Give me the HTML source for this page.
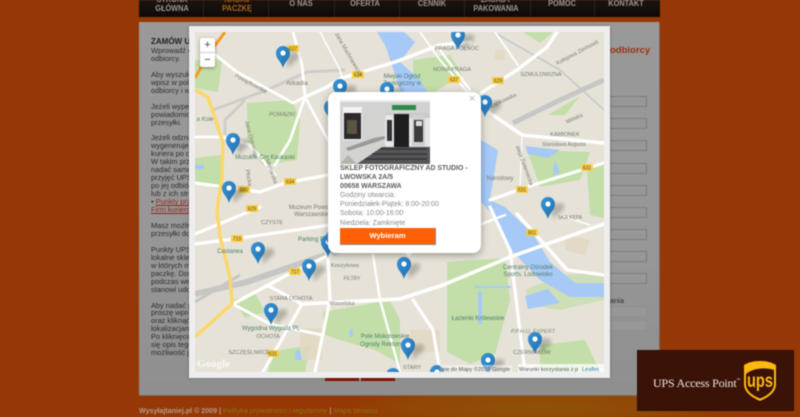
<!DOCTYPE html>
<html lang="pl"><head><meta charset="utf-8"><title>Wysylajtaniej.pl</title>
<style>
html,body{margin:0;padding:0;width:800px;height:417px;overflow:hidden}
body{position:relative;background:#963805;font-family:"Liberation Sans",sans-serif}
#clip{position:absolute;left:0;top:0;width:800px;height:417px;overflow:hidden}
#w{position:absolute;left:0;top:0;width:800px;height:417px;filter:blur(.4px)}
.a{position:absolute}
.glow{left:340px;top:385px;width:400px;height:32px;background:radial-gradient(ellipse at 50% 70%,#8e5207 0%,rgba(142,82,7,.6) 45%,rgba(150,56,5,0) 72%)}
nav{left:139px;top:0;width:521px;height:17px;background:linear-gradient(#1c1410,#0d0a08);overflow:hidden}
nav b{position:absolute;text-align:center;width:64px;font-size:8px;line-height:9px;color:#9c9792;transform:scaleX(.92)}
nav i{position:absolute;top:0;width:1px;height:17px;background:#2a211c}
.panel{left:139px;top:22px;width:520px;height:373px;background:linear-gradient(#999 0,#979797 60%,#8f8f8f 100%);border-right:1px solid #7d6a5c;border-bottom:1px solid #7d6a5c}
.txt{left:151px;top:47px;width:60px;font-size:7.4px;line-height:7.95px;color:#2e2e2e;white-space:nowrap}
.txt u{color:#8a2a20}
.inp{left:560px;width:85px;height:9px;border:1px solid #7c7c7c;background:#979797}
.modal{left:189px;top:26px;width:421px;height:352px;background:#eee;box-shadow:0 0 3px rgba(0,0,0,.3)}
.pop{left:328px;top:92px;width:153px;height:161px;background:#fff;border-radius:8px;box-shadow:0 2px 8px rgba(0,0,0,.35);font-size:7px;line-height:9.1px;color:#8a8a8a;white-space:nowrap}
.pop p{margin:0;position:absolute;left:12px;top:72px}
.pop b{color:#5e5e5e;font-size:6.9px}
.btn{left:12px;top:136px;width:96px;height:17px;background:#ff5f05;color:#fff;font-weight:bold;font-size:7.6px;line-height:16px;text-align:center;border-bottom:1px solid #8a8a8a;border-right:1px solid #8a8a8a;box-sizing:border-box}
.zoom{left:200px;top:38px;width:15px;height:29px;background:#fff;border-radius:2px;box-shadow:0 1px 3px rgba(0,0,0,.4);color:#444;text-align:center;font-size:11px;line-height:14px}
.foot{left:139px;top:407px;font-size:7.1px;line-height:9px;color:#b39a8a;font-weight:bold;white-space:nowrap}
.foot span{color:#8d7410;font-weight:normal}
.ups{left:638px;top:351px;width:155px;height:59px;background:#3a1206;box-shadow:0 0 0 1px #2a1005}
</style></head><body><div id="clip"><div id="w">
<div class="a glow"></div>
<nav class="a">
<i style="left:64px"></i><i style="left:129px"></i><i style="left:195px"></i><i style="left:260px"></i><i style="left:325px"></i><i style="left:391px"></i><i style="left:455px"></i>
<b style="left:1px;top:-5px">STRONA<br>GŁÓWNA</b>
<b style="left:66px;top:-5px;color:#a5651f">NADAJ<br>PACZKĘ</b>
<b style="left:130px;top:-1px">O NAS</b>
<b style="left:194px;top:-1px">OFERTA</b>
<b style="left:261px;top:-1px">CENNIK</b>
<b style="left:325px;top:-5px">ZASADY<br>PAKOWANIA</b>
<b style="left:391px;top:-1px">POMOC</b>
<b style="left:455px;top:-1px">KONTAKT</b>
</nav>
<div class="a panel"></div>
<div class="a txt"><b style="font-size:8px;position:absolute;top:-9px;left:0;color:#222">ZAMÓW U</b>Wprowadź dane<br>odbiorcy.<br><br>Aby wyszukać<br>wpisz w polach<br>odbiorcy i wybierz<br><br>Jeżeli wypełnisz<br>powiadomione<br>przesyłki.<br><br>Jeżeli odznaczysz<br>wygeneruje list<br>kuriera po odbiór<br>W takim przypadku<br>nadać samodzielnie<br>przyjęć UPS<br>po jej odbiór<br>lub z ich strony<br>▪ <u>Punkty przesyłek</u><br><u>Firm kurierskich</u><br><br>Masz możliwość<br>przesyłki do<br><br>Punkty UPS<br>lokalne sklepy<br>w których możesz<br>paczkę. Dostępne<br>podczas weekendu<br>stanowi udogodnienie<br><br>Aby nadać paczkę<br>proszę wprowadzić<br>oraz kliknąć<br>lokalizacjami<br>Po kliknięciu<br>się opis tego<br>możliwość jego</div>
<div class="a" style="left:610px;top:45px;font-size:9.5px;font-weight:bold;color:#9a3212">odbiorcy</div>
<div class="a inp" style="top:96px"></div><div class="a inp" style="top:118px"></div><div class="a inp" style="top:140px"></div><div class="a inp" style="top:163px"></div><div class="a inp" style="top:185px"></div><div class="a inp" style="top:207px"></div><div class="a inp" style="top:229px"></div><div class="a inp" style="top:251px"></div><div class="a inp" style="top:273px"></div>
<div class="a" style="left:610px;top:296px;font-size:7.4px;color:#303030">ania</div>
<div class="a inp" style="top:306px;border-color:#8f8f8f"></div><div class="a inp" style="top:320px;border-color:#8f8f8f"></div>
<div class="a" style="left:325px;top:376px;width:34px;height:5px;background:#8a1208"></div>
<div class="a" style="left:361px;top:376px;width:34px;height:5px;background:#8a1208"></div>
<div class="a modal"></div>
<svg class="a" style="left:0;top:0" width="800" height="417" viewBox="0 0 800 417">
<defs>
<clipPath id="c"><rect x="195" y="32" width="409" height="340"/></clipPath>
<linearGradient id="p" x1="0" y1="0" x2="1" y2="1"><stop offset="0" stop-color="#3a94d6"/><stop offset="1" stop-color="#1f6fb0"/></linearGradient>
<filter id="s"><feGaussianBlur stdDeviation="2"/></filter>
<symbol id="pin" overflow="visible"><path d="M5,0 L16,-10 Q18,-16 10,-16 L3,-12Z" fill="#000" opacity=".22" filter="url(#s)"/><path d="M0,0C-2,-7-7,-9-7,-15A7,7 0 1 1 7,-15C7,-9 2,-7 0,0Z" fill="url(#p)"/><circle cx="0" cy="-15" r="2.600" fill="#fff"/></symbol>
</defs>
<g clip-path="url(#c)">
<rect x="195" y="32" width="409" height="340" fill="#e6e2d7"/>
<g fill="#c3dea9">
<path d="M247,103L292,100 300,120 297,160 262,165 247,140Z"/>
<path d="M195,60L222,60 218,92 195,88Z"/>
<path d="M195,158L222,155 222,190 195,183Z"/>
<path d="M323,312L390,300 400,320 400,364 375,350 340,340 325,335Z"/>
<path d="M447,262L505,258 510,300 495,354 470,364 447,352Z"/>
<path d="M527,150L590,152 580,180 540,187Z"/>
<path d="M587,170L604,163 604,218 590,215Z"/>
<path d="M540,345L585,340 600,372 540,372Z"/>
<path d="M413,60L450,55 462,75 430,95 413,90Z"/>
<path d="M523,32L553,32 540,43Z"/>
<path d="M270,352L310,345 305,372 268,372Z"/>
<path d="M525,290L560,275 604,272 604,300 560,310 530,305Z" opacity=".7"/>
<path d="M233,300L255,293 265,312 245,318Z"/>
<path d="M548,115L580,96 565,115Z"/>
</g>
<g fill="#e2d8c0" opacity=".8"><rect x="300" y="328" width="22" height="32"/><rect x="495" y="50" width="10" height="10"/><rect x="410" y="330" width="30" height="22"/><path d="M565,235L590,240 585,255 565,250Z"/></g>
<g fill="#a6c9f8">
<path d="M377,32L404,32 415,42 400,62 420,80 445,120 470,135 481,140 498,150 490,200 505,207 533,234 550,262 575,283 604,283 604,297 570,297 540,280 513,252 493,215 470,190 440,140 400,90 392,65 385,45Z"/>
<path d="M525,296L548,289 560,303 528,309Z"/>
<path d="M525,146L560,150 548,158 528,154Z"/>
<path d="M555,160L560,172 553,175Z"/>
<rect x="475" y="286" width="36" height="2"/>
<rect x="478" y="292" width="4" height="32"/>
<path d="M296,350L300,350 302,360 295,360Z"/>
<ellipse cx="351" cy="333" rx="2" ry="4"/>
<rect x="195" y="165" width="9" height="4"/>
</g>
<g fill="none" stroke="#cfcdc9" stroke-width="3">
<path d="M213,110L267,90 307,72 345,70"/>
<path d="M225,135L225,120 245,100"/>
</g>
<g fill="none" stroke="#c6c6c6">
<path d="M195,294L247,282 325,255" stroke-width="6"/>
<path d="M195,302L240,275" stroke-width="3"/>
<path d="M513,123L560,100 604,80" stroke-width="5"/>
<path d="M495,33L560,70 604,110" stroke-width="1.5"/>
</g>
<g fill="none" stroke="#fff" stroke-linecap="round" stroke-linejoin="round" stroke-width="2.800">
<path d="M213,53L237,72 293,103 305,97"/>
<path d="M293,32L302,65 305,97 290,140 275,165"/>
<path d="M305,97L328,140" />
<path d="M305,97L325,88 342,78 395,62 440,45 470,42" stroke-width="3.400"/>
<path d="M195,137L222,137 250,145 275,175"/>
<path d="M195,183L225,187 260,192 285,183 328,175" stroke-width="3.200"/>
<path d="M195,234L260,207" stroke-width="3.200"/>
<path d="M195,244L233,239 330,225" stroke-width="3.200"/>
<path d="M233,304L287,275 325,257" stroke-width="3.400"/>
<path d="M233,304L270,324 322,335"/>
<path d="M267,285L302,304 263,372" stroke-width="3.200"/>
<path d="M328,260L330,300 315,372" stroke-width="3.200"/>
<path d="M302,304L400,299 443,285 510,257 604,224" stroke-width="3.600"/>
<path d="M490,207L510,250 517,307 525,372" stroke-width="3.200"/>
<path d="M517,214L547,247 567,270 604,275" stroke-width="3.400"/>
<path d="M413,300L433,330 440,372" stroke-width="3.200"/>
<path d="M373,255L380,300 400,372" stroke-width="2.400"/>
<path d="M481,93L517,70 547,47 557,32" stroke-width="3.400"/>
<path d="M490,113L522,135 604,143" stroke-width="3.600"/>
<path d="M490,200L533,185 604,163" stroke-width="3.200"/>
<path d="M495,32L518,65" stroke-width="1.800"/>
<path d="M420,32L440,60 470,95" stroke-width="1.800"/>
<path d="M320,32L340,70 345,90" stroke-width="1.600"/>
<path d="M440,50L470,90" stroke-width="2.400"/>
<path d="M522,135L520,190" stroke-width="1.200"/>
<path d="M440,240L505,215" stroke-width="2.400"/>
<path d="M560,215L590,225" stroke-width="1.600"/>
</g>
<path d="M225,32L208,55 195,78" fill="none" stroke="#f59b22" stroke-width="3"/>
<path d="M195,90L208,97 223,143 222,177 217,210 220,237 230,277 232,304 195,337" fill="none" stroke="#fdd769" stroke-width="3.400" stroke-linejoin="round"/>
<g fill="#f8ce45">
<rect x="287" y="45" width="12" height="7" rx="1"/><rect x="352" y="71" width="12" height="7" rx="1"/><rect x="448" y="76" width="12" height="7" rx="1"/><rect x="492" y="77" width="12" height="7" rx="1"/><rect x="284" y="178" width="12" height="7" rx="1"/><rect x="238" y="186" width="12" height="7" rx="1"/><rect x="246" y="205" width="12" height="7" rx="1"/><rect x="231" y="235" width="12" height="7" rx="1"/><rect x="289" y="268" width="12" height="7" rx="1"/><rect x="267" y="350" width="12" height="7" rx="1"/><rect x="581" y="164" width="12" height="7" rx="1"/><rect x="516" y="186" width="12" height="7" rx="1"/><rect x="526" y="229" width="12" height="7" rx="1"/>
</g>
<g font-family="Liberation Sans,sans-serif" font-size="5" fill="#5a4a1a" text-anchor="middle">
<text x="293" y="50.500">637</text><text x="358" y="76.500">634</text><text x="454" y="81.500">637</text><text x="498" y="82.500">629</text><text x="290" y="183.500">634</text><text x="244" y="191.500">580</text><text x="252" y="210.500">629</text><text x="237" y="240.500">719</text><text x="295" y="273.500">717</text><text x="273" y="355.500">631</text><text x="587" y="169.500">631</text><text x="522" y="191.500">631</text><text x="532" y="234.500">801</text>
</g>
<g font-family="Liberation Sans,sans-serif" font-size="5.6" fill="#7a7a74" text-anchor="middle">
<text x="297" y="85" font-size="6.4">Arkadia</text>
<text x="282" y="116" font-style="italic">POWĄZKI</text>
<text x="205" y="121" font-size="6" fill="#5d8a68" font-style="italic">a Kole</text>
<text x="265" y="159" font-size="6" fill="#4c8068">Muzułm. Cm Kaukaski</text>
<text x="272" y="224">CZYSTE</text>
<text x="315" y="209" font-size="6">Muzeum Powstania</text>
<text x="315" y="216" font-size="6">Warszawskiego</text>
<text x="312" y="241" font-size="6" fill="#4c8068">Parking Pr</text>
<text x="230" y="253" font-size="6" fill="#4c8068">Castanea</text>
<text x="291" y="300">STARA OCHOTA</text>
<text x="271" y="330" font-size="6" fill="#4c8068">Wygodna Wygoda PL</text>
<text x="268" y="338">OCHOTA</text>
<text x="249" y="354" font-size="5.6">SZCZĘŚLIWICE</text>
<text x="342" y="305">Wawelska</text>
<text x="345" y="267">Koszykowa</text>
<text x="352" y="280" font-size="5">FILTRY</text>
<text x="385" y="338" font-size="6" fill="#4c8068">Pole Mokotowskie</text>
<text x="385" y="346" font-size="6" fill="#4c8068">Ogrody Rektorskie</text>
<text x="457" y="50">PRAGA PÓŁNOC</text>
<text x="452" y="71">NOWA PRAGA</text>
<text x="541" y="76">SZMULOWIZNA</text>
<text x="402" y="78" font-size="6" fill="#4c8068">Miejski Ogród</text>
<text x="402" y="85" font-size="6" fill="#4c8068">Zoologiczny w</text>
<text x="565" y="136">KAMIONEK</text>
<text x="500" y="180" font-size="6">Narodowy</text>
<text x="570" y="219" font-size="5">SKA KĘPA</text>
<text x="528" y="269" font-size="6" fill="#4c8068">Centralny Ośrodek</text>
<text x="528" y="276" font-size="6" fill="#4c8068">Sports. Lodowisko</text>
<text x="478" y="320" font-size="6" fill="#4c8068">Łazienki Królewskie</text>
<text x="533" y="333" fill="#7a8c7a" font-style="italic">P.P.H.U. EXPERT</text>
<text x="532" y="354">CZERNIAKÓW</text>
<text x="412" y="369">STARY</text>
<text x="578" y="54" transform="rotate(-28 578 54)">Kolejowa Ziemowit</text>
<text x="504" y="102" transform="rotate(-25 504 102)">Ząbkowska</text>
<text x="575" y="120" transform="rotate(-25 575 120)">Mińska</text>
<text x="523" y="166" transform="rotate(70 523 166)">aleja Zieleniecka</text>
<text x="564" y="146" font-size="5">Stanisława Augusta</text>
<text x="250" y="85" transform="rotate(28 250 85)">Powązkowska</text>
<text x="250" y="140" transform="rotate(75 250 140)">Jana Ostroroga</text>
<text x="270" y="172" transform="rotate(70 270 172)">Młynarska</text>
<text x="247" y="178" transform="rotate(80 247 178)">Płocka</text>
<text x="347" y="55" transform="rotate(60 347 55)">Jana Muchniewicza</text>
</g>
<g>
<use href="#pin" x="283" y="68"/><use href="#pin" x="233" y="155"/><use href="#pin" x="229" y="203"/><use href="#pin" x="340" y="101"/><use href="#pin" x="387" y="104"/><use href="#pin" x="331" y="122"/><use href="#pin" x="458" y="50"/><use href="#pin" x="485" y="117"/><use href="#pin" x="548" y="219"/><use href="#pin" x="258" y="264"/><use href="#pin" x="309" y="281"/><use href="#pin" x="271" y="325"/><use href="#pin" x="328" y="257"/><use href="#pin" x="333" y="252"/><use href="#pin" x="393" y="390"/><use href="#pin" x="404" y="279"/><use href="#pin" x="535" y="354"/><use href="#pin" x="488" y="375"/><use href="#pin" x="408" y="360"/><use href="#pin" x="437" y="387"/>
</g>
<rect x="518" y="364" width="86" height="8" fill="#fff" opacity=".75"/>
<rect x="440" y="365" width="72" height="7" fill="#fff" opacity=".45"/>
<text x="440" y="371" font-family="Liberation Sans,sans-serif" font-size="5.6" fill="#555">ane do Mapy ©2016 Google</text>
<text x="519" y="371" font-family="Liberation Sans,sans-serif" font-size="5.6" fill="#555">Warunki korzystania z p</text>
<text x="582" y="371" font-family="Liberation Sans,sans-serif" font-size="5.6" fill="#3b7fb0">Leaflet</text>
<text x="197" y="367" font-family="Liberation Serif,serif" font-size="11" fill="#fff" opacity=".8" font-weight="bold">Google</text>
</g>
</svg>
<div class="a zoom"><div style="border-bottom:1px solid #ccc;height:14px">+</div><div>−</div></div>
<svg class="a" style="left:328px;top:252px" width="153" height="8"><path d="M76,0L81,5 86,0Z" fill="#fff"/></svg>
<div class="a pop">
<svg class="a" style="left:12px;top:8px" width="90" height="64" viewBox="0 0 90 64">
<rect width="90" height="64" fill="#d2d2d0"/>
<rect y="0" width="90" height="2" fill="#eee"/>
<rect x="3" y="7" width="19" height="33" fill="#f2f2f2"/>
<rect x="4" y="13" width="17" height="26" fill="#2c2a2e"/>
<rect x="7" y="20" width="10" height="14" fill="#5a5440"/>
<path d="M45,17L90,13V46H45Z" fill="#e5e6e6"/>
<rect x="46" y="13" width="44" height="5" fill="#c9c9c7"/>
<rect x="52" y="5" width="24" height="5" fill="#2f8a4a"/>
<rect x="46" y="15" width="7" height="32" fill="#e8e8e8"/>
<rect x="47" y="20" width="5" height="21" fill="#33323a"/>
<rect x="54" y="14" width="15" height="33" fill="#1e1e1e"/>
<rect x="72" y="15" width="13" height="32" fill="#cfcfcf"/>
<rect x="74" y="20" width="9" height="22" fill="#3c3c3c"/>
<rect x="76" y="21" width="6" height="5" fill="#ddd"/>
<path d="M6,48L34,38 45,36V39L8,51Z" fill="#9a9a9a"/>
<path d="M17,64L42,47H90V64Z" fill="#565658"/>
<path d="M40,49H87M32,54H87M25,59H87" stroke="#303032" stroke-width="1.2"/>
<path d="M0,64L8,55 17,64Z" fill="#b5b2a8"/>
</svg>
<p><b>SKLEP FOTOGRAFICZNY AD STUDIO -<br>LWOWSKA 2A/5<br>00658 WARSZAWA</b><br>Godziny otwarcia:<br>Poniedziałek-Piątek: 8:00-20:00<br>Sobota: 10:00-16:00<br>Niedziela: Zamknięte</p>
<div class="a btn">Wybieram</div>
<div class="a" style="left:141px;top:2px;font-size:11px;line-height:11px;color:#b5b5b5">×</div>
</div>
<div class="a foot">Wysyłajtaniej.pl © 2009 | <span>Polityka prywatności i regulaminy</span> | <span>Mapa serwisu</span></div>
<div class="a ups">
<div class="a" style="left:15px;top:22px;font-family:'Liberation Serif',serif;font-size:12px;line-height:14px;color:#ece7e2;white-space:nowrap;letter-spacing:-.2px">UPS Access Point<span style="font-size:4px;vertical-align:6px">™</span></div>
<svg class="a" style="left:105px;top:9px" width="34" height="42" viewBox="0 0 34 42">
<path d="M17,1C10,1 5,2.500 1,5V24C1,32 8,37 17,41C26,37 33,32 33,24V5C29,2.500 24,1 17,1Z" fill="#fbb80f"/>
<path d="M3,14C10,8 22,7 31,10V24C31,30.500 25,35.500 17,38.500C9,35.500 3,30.500 3,24Z" fill="#3a1206"/>
<text x="17" y="27" text-anchor="middle" font-family="Liberation Sans,sans-serif" font-weight="bold" font-size="19" fill="#fbb80f" textLength="26" lengthAdjust="spacingAndGlyphs">ups</text>
</svg>
</div>
</div></div></body></html>
